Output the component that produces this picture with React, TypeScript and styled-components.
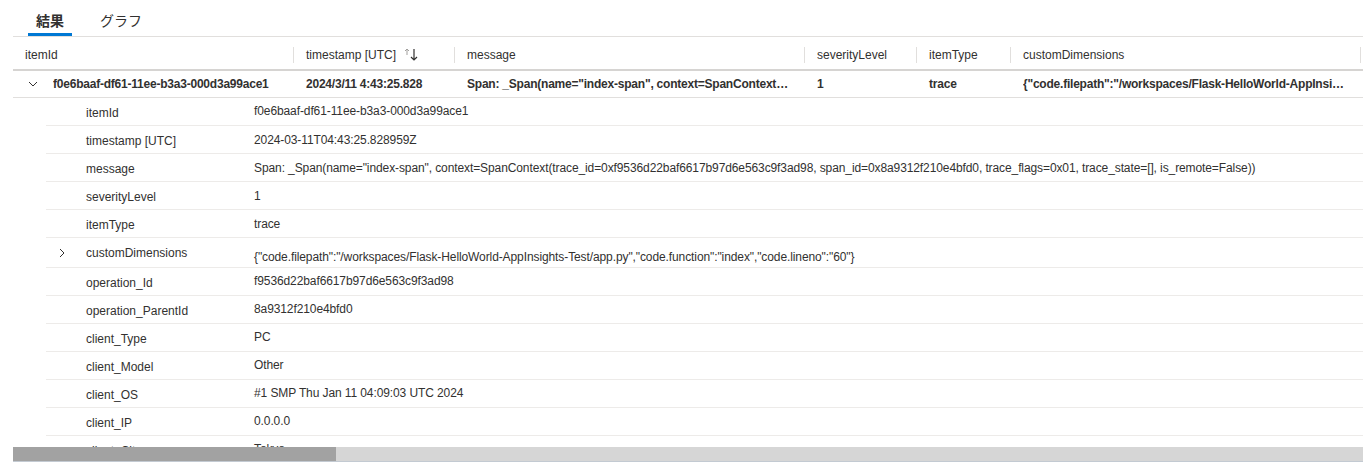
import React from "react";
import styled, { createGlobalStyle } from "styled-components";

const GlobalStyle = createGlobalStyle`
  html, body { margin: 0; padding: 0; background: #ffffff; }
  body { font-family: "Liberation Sans", Arial, sans-serif; color: #323130; }
`;

const Root = styled.div`
  height: 465px;
  width: 1363px;
  display: flex;
  flex-direction: column;
  overflow: hidden;
  padding-left: 13px;
  box-sizing: border-box;
`;

const Body = styled.div`
  flex: 1;
  min-height: 0;
  overflow: hidden;
`;

const TabBar = styled.div`
  display: flex;
  gap: 20px;
  height: 36px;
  padding-left: 15px;
  border-bottom: 1px solid #e1dfdd;
  width: 1400px;
`;

const Tab = styled.div<{ $active?: boolean }>`
  display: flex;
  align-items: center;
  padding: 6px 8px 0;
  box-sizing: border-box;
  height: 36px;
  border-bottom: 3px solid ${(p) => (p.$active ? "#0078d4" : "transparent")};
  font-family: "Noto Sans CJK JP", sans-serif;
  font-size: 14px;
  font-weight: ${(p) => (p.$active ? 600 : 400)};
  color: #323130;
`;

const cols = "281px 161px 350px 112px 94px 350px";

const HeaderRow = styled.div`
  display: grid;
  grid-template-columns: ${cols};
  height: 32px;
  border-bottom: 2px solid #d6d4d2;
  width: 1398px;
`;

const HeaderCell = styled.div`
  display: flex;
  align-items: center;
  padding: 3px 0 0 12px;
  font-size: 12px;
  color: #323130;
  white-space: nowrap;
`;

const Sep = styled.span`
  margin-left: auto;
  width: 1px;
  height: 16px;
  background: #e1dfdd;
`;

const SortIcon = styled.svg`
  margin-left: 8px;
  flex: none;
`;

const DataRow = styled.div`
  display: grid;
  grid-template-columns: ${cols};
  height: 26px;
  border-bottom: 1px solid #e1dfdd;
  width: 1398px;
`;

const DataCell = styled.div<{ $lead?: boolean }>`
  display: flex;
  align-items: center;
  padding: 0 14px 0 ${(p) => (p.$lead ? "0" : "12px")};
  font-size: 12px;
  font-weight: 600;
  letter-spacing: -0.22px;
  color: #323130;
  white-space: nowrap;
  overflow: hidden;
  min-width: 0;
`;

const Ellipsis = styled.span`
  overflow: hidden;
  text-overflow: ellipsis;
  white-space: nowrap;
  min-width: 0;
`;

const ExpandSlot = styled.span`
  width: 40px;
  flex: none;
  display: flex;
  align-items: center;
  justify-content: center;
`;

const Details = styled.div`
  margin-left: 33px;
  width: 1400px;
`;

const DetailRow = styled.div<{ $h: number }>`
  display: grid;
  grid-template-columns: 208px 1fr;
  height: ${(p) => p.$h}px;
  border-bottom: 1px solid #edebe9;
  font-size: 12px;
  color: #323130;
`;

const Key = styled.div`
  display: flex;
  align-items: flex-start;
  padding-top: 7px;
  line-height: 16px;
  white-space: nowrap;
`;

const KeySlot = styled.span`
  width: 40px;
  height: 16px;
  flex: none;
  display: flex;
  align-items: center;
  justify-content: center;
`;

const Value = styled.div<{ $top: number }>`
  padding-top: ${(p) => p.$top}px;
  line-height: 16px;
  white-space: nowrap;
  letter-spacing: -0.1px;
`;

const Scrollbar = styled.div`
  height: 14px;
  flex: none;
  margin-bottom: 3px;
  background: #d6d6d6;
  border-bottom: 1px solid #c3cad2;
  display: flex;
`;

const Thumb = styled.div`
  width: 323px;
  background: #a2a2a2;
`;

const ChevronDown = () => (
  <svg width="10" height="6" viewBox="0 0 10 6">
    <path d="M1 1 L5 5 L9 1" fill="none" stroke="#323130" strokeWidth="1" />
  </svg>
);

const ChevronRight = () => (
  <svg width="6" height="10" viewBox="0 0 6 10" style={{ marginRight: 8 }}>
    <path d="M1 1 L5 5 L1 9" fill="none" stroke="#323130" strokeWidth="1" />
  </svg>
);

const headers = ["itemId", "timestamp [UTC]", "message", "severityLevel", "itemType", "customDimensions"];

const details: { k: string; v: string; h: number; top: number; expand?: boolean }[] = [
  { k: "itemId", v: "f0e6baaf-df61-11ee-b3a3-000d3a99ace1", h: 27, top: 5 },
  { k: "timestamp [UTC]", v: "2024-03-11T04:43:25.828959Z", h: 27, top: 6 },
  {
    k: "message",
    v: 'Span: _Span(name="index-span", context=SpanContext(trace_id=0xf9536d22baf6617b97d6e563c9f3ad98, span_id=0x8a9312f210e4bfd0, trace_flags=0x01, trace_state=[], is_remote=False))',
    h: 27,
    top: 6,
  },
  { k: "severityLevel", v: "1", h: 27, top: 6 },
  { k: "itemType", v: "trace", h: 27, top: 6 },
  {
    k: "customDimensions",
    v: '{"code.filepath":"/workspaces/Flask-HelloWorld-AppInsights-Test/app.py","code.function":"index","code.lineno":"60"}',
    h: 29,
    top: 11,
    expand: true,
  },
  { k: "operation_Id", v: "f9536d22baf6617b97d6e563c9f3ad98", h: 27, top: 5 },
  { k: "operation_ParentId", v: "8a9312f210e4bfd0", h: 27, top: 5 },
  { k: "client_Type", v: "PC", h: 27, top: 5 },
  { k: "client_Model", v: "Other", h: 27, top: 5 },
  { k: "client_OS", v: "#1 SMP Thu Jan 11 04:09:03 UTC 2024", h: 27, top: 5 },
  { k: "client_IP", v: "0.0.0.0", h: 27, top: 5 },
  { k: "client_City", v: "Tokyo", h: 27, top: 5 },
];

export default function App() {
  return (
    <>
      <GlobalStyle />
      <Root>
        <Body>
          <TabBar>
            <Tab $active>結果</Tab>
            <Tab>グラフ</Tab>
          </TabBar>
          <HeaderRow>
            {headers.map((h) => (
              <HeaderCell key={h}>
                {h}
                {h === "timestamp [UTC]" && (
                  <SortIcon width="14" height="16" viewBox="0 0 14 16">
                    <path d="M3 8 V2 M1 4 L3 2 L5 4" fill="none" stroke="#a19f9d" strokeWidth="1" />
                    <path d="M10 2 V13 M7 10 L10 13 L13 10" fill="none" stroke="#323130" strokeWidth="1.2" />
                  </SortIcon>
                )}
                <Sep />
              </HeaderCell>
            ))}
          </HeaderRow>
          <DataRow>
            <DataCell $lead>
              <ExpandSlot>
                <ChevronDown />
              </ExpandSlot>
              <Ellipsis>f0e6baaf-df61-11ee-b3a3-000d3a99ace1</Ellipsis>
            </DataCell>
            <DataCell>2024/3/11 4:43:25.828</DataCell>
            <DataCell>
              <Ellipsis>
                Span: _Span(name="index-span", context=SpanContext(trace_id=0xf9536d22baf6617b97d6e563c9f3ad98, span_id=0x8a9312f210e4bfd0)
              </Ellipsis>
            </DataCell>
            <DataCell>1</DataCell>
            <DataCell>trace</DataCell>
            <DataCell>
              <Ellipsis>
                {'{"code.filepath":"/workspaces/Flask-HelloWorld-AppInsights-Test/app.py","code.function":"index","code.lineno":"60"}'}
              </Ellipsis>
            </DataCell>
          </DataRow>
          <Details>
            {details.map((d) => (
              <DetailRow key={d.k} $h={d.h}>
                <Key>
                  <KeySlot>{d.expand && <ChevronRight />}</KeySlot>
                  {d.k}
                </Key>
                <Value $top={d.top}>{d.v}</Value>
              </DetailRow>
            ))}
          </Details>
        </Body>
        <Scrollbar>
          <Thumb />
        </Scrollbar>
      </Root>
    </>
  );
}
